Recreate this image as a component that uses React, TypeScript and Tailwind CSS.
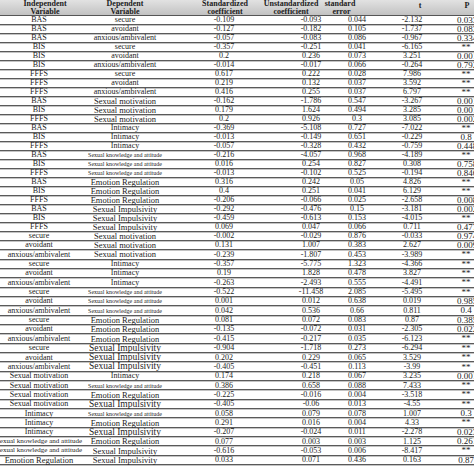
import React from "react";

type Row = [string, string, string, string, string, string, string];

const SKA = "Sexual knowledge and attitude";

const rows: Row[] = [
  ["BAS", "secure", "-0.109", "-0.093", "0.044", "-2.132", "0.033"],
  ["BAS", "avoidant", "-0.127", "-0.182", "0.105", "-1.737", "0.083"],
  ["BAS", "anxious/ambivalent", "-0.057", "-0.083", "0.086", "-0.967", "0.334"],
  ["BIS", "secure", "-0.357", "-0.251", "0.041", "-6.165", "**"],
  ["BIS", "avoidant", "0.2", "0.236", "0.073", "3.251", "0.001"],
  ["BIS", "anxious/ambivalent", "-0.014", "-0.017", "0.066", "-0.264", "0.792"],
  ["FFFS", "secure", "0.617", "0.222", "0.028", "7.986", "**"],
  ["FFFS", "avoidant", "0.219", "0.132", "0.037", "3.592", "**"],
  ["FFFS", "anxious/ambivalent", "0.416", "0.255", "0.037", "6.797", "**"],
  ["BAS", "Sexual motivation", "-0.162", "-1.786", "0.547", "-3.267", "0.001"],
  ["BIS", "Sexual motivation", "0.179", "1.624", "0.494", "3.285", "0.001"],
  ["FFFS", "Sexual motivation", "0.2", "0.926", "0.3", "3.085", "0.002"],
  ["BAS", "Intimacy", "-0.369", "-5.108", "0.727", "-7.022", "**"],
  ["BIS", "Intimacy", "-0.013", "-0.149", "0.651", "-0.229", "0.8"],
  ["FFFS", "Intimacy", "-0.057", "-0.328", "0.432", "-0.759", "0.448"],
  ["BAS", SKA, "-0.216", "-4.057", "0.968", "-4.189", "**"],
  ["BIS", SKA, "0.016", "0.254", "0.827", "0.308", "0.758"],
  ["FFFS", SKA, "-0.013", "-0.102", "0.525", "-0.194", "0.846"],
  ["BAS", "Emotion Regulation", "0.316", "0.242", "0.05", "4.826", "**"],
  ["BIS", "Emotion Regulation", "0.4", "0.251", "0.041", "6.129", "**"],
  ["FFFS", "Emotion Regulation", "-0.206", "-0.066", "0.025", "-2.658", "0.008"],
  ["BAS", "Sexual Impulsivity", "-0.292", "-0.476", "0.15", "-3.181", "0.002"],
  ["BIS", "Sexual Impulsivity", "-0.459", "-0.613", "0.153", "-4.015", "**"],
  ["FFFS", "Sexual Impulsivity", "0.069", "0.047", "0.066", "0.711", "0.477"],
  ["secure", "Sexual motivation", "-0.002", "-0.029", "0.876", "-0.033", "0.974"],
  ["avoidant", "Sexual motivation", "0.131", "1.007", "0.383", "2.627", "0.009"],
  ["anxious/ambivalent", "Sexual motivation", "-0.239", "-1.807", "0.453", "-3.989", "**"],
  ["secure", "Intimacy", "-0.357", "-5.775", "1.323", "-4.366", "**"],
  ["avoidant", "Intimacy", "0.19", "1.828", "0.478", "3.827", "**"],
  ["anxious/ambivalent", "Intimacy", "-0.263", "-2.493", "0.555", "-4.491", "**"],
  ["secure", SKA, "-0.522", "-11.458", "2.085", "-5.495", "**"],
  ["avoidant", SKA, "0.001", "0.012", "0.638", "0.019", "0.985"],
  ["anxious/ambivalent", SKA, "0.042", "0.536", "0.66", "0.811", "0.4"],
  ["secure", "Emotion Regulation", "0.081", "0.072", "0.083", "0.87", "0.385"],
  ["avoidant", "Emotion Regulation", "-0.135", "-0.072", "0.031", "-2.305", "0.022"],
  ["anxious/ambivalent", "Emotion Regulation", "-0.415", "-0.217", "0.035", "-6.123", "**"],
  ["secure", "Sexual Impulsivity", "-0.904", "-1.718", "0.273", "-6.294", "**"],
  ["avoidant", "Sexual Impulsivity", "0.202", "0.229", "0.065", "3.529", "**"],
  ["anxious/ambivalent", "Sexual Impulsivity", "-0.405", "-0.451", "0.113", "-3.99", "**"],
  ["Sexual motivation", "Intimacy", "0.174", "0.218", "0.067", "3.235", "0.001"],
  ["Sexual motivation", SKA, "0.386", "0.658", "0.088", "7.433", "**"],
  ["Sexual motivation", "Emotion Regulation", "-0.225", "-0.016", "0.004", "-3.518", "**"],
  ["Sexual motivation", "Sexual Impulsivity", "-0.405", "-0.06", "0.013", "-4.55", "**"],
  ["Intimacy", SKA, "0.058", "0.079", "0.078", "1.007", "0.3"],
  ["Intimacy", "Emotion Regulation", "0.291", "0.016", "0.004", "4.33", "**"],
  ["Intimacy", "Sexual Impulsivity", "-0.207", "-0.024", "0.011", "-2.278", "0.023"],
  [SKA, "Emotion Regulation", "0.077", "0.003", "0.003", "1.125", "0.261"],
  [SKA, "Sexual Impulsivity", "-0.616", "-0.053", "0.006", "-8.417", "**"],
  ["Emotion Regulation", "Sexual Impulsivity", "0.033", "0.071", "0.436", "0.163", "0.87"],
];

// bigger "Sexual Impulsivity" rows in the lower half of the table
const bigRows = [36, 37, 38, 42, 45];

function depSize(name: string, i: number) {
  if (name === SKA) return "text-[6px]";
  if (name === "Sexual Impulsivity") return bigRows.includes(i) ? "text-[9.5px]" : "text-[8.5px]";
  if (name === "Emotion Regulation") return "text-[8.5px]";
  if (name === "Sexual motivation") return "text-[8.5px]";
  return "text-[8px]";
}

function indSize(name: string) {
  if (name === SKA) return "text-[7px]";
  if (name === "Emotion Regulation") return "text-[8.5px]";
  return "text-[8px]";
}

const cols = "grid grid-cols-[78px_94px_104px_70px_22px_88px_1fr]";
const cell = "flex items-center justify-center whitespace-nowrap leading-none";

export default function App() {
  return (
    <div
      className="w-[474px] h-[466px] overflow-hidden bg-white text-[#1c1c1c]"
      style={{ fontFamily: '"Liberation Serif", "Times New Roman", serif' }}
    >
      <div className={`${cols} h-[15.5px] bg-linear-to-b from-[#e2e2e2] to-[#c2c2c2] border-b border-[#555] font-bold text-[8px] leading-[7.5px]`}>
        <div className={`${cell} flex-col translate-x-[6px]`}>
          <span>Independent</span>
          <span>Variable</span>
        </div>
        <div className={`${cell} flex-col`}>
          <span>Dependent</span>
          <span>Variable</span>
        </div>
        <div className={`${cell} flex-col translate-x-[1px]`}>
          <span>Standardized</span>
          <span>coefficient</span>
        </div>
        <div className={`${cell} flex-col -translate-x-[20px]`}>
          <span>Unstandardized</span>
          <span>coefficient</span>
        </div>
        <div className={`${cell} flex-col -translate-x-[17px]`}>
          <span>standard</span>
          <span className="pl-[3px]">error</span>
        </div>
        <div className={`${cell} translate-x-[8px] -translate-y-[2px]`}>t</div>
        <div className={`${cell} translate-x-[2px] -translate-y-[2px]`}>P</div>
      </div>

      {rows.map((r, i) => (
        <div
          key={i}
          className={`${cols} ${i < 24 ? "h-[9px]" : "h-[9.35px]"} border-b border-[#5a5a5a] shadow-[0_1px_0_#c4c4c4] text-[8px]`}
        >
          <div className={`${cell} ${indSize(r[0])}`}>{r[0]}</div>
          <div className={`${cell} ${depSize(r[1], i)}`}>{r[1]}</div>
          <div className={cell}>{r[2]}</div>
          <div className={cell}>{r[3]}</div>
          <div className={cell}>{r[4]}</div>
          <div className={cell}>{r[5]}</div>
          <div className={`${cell} text-[9px] translate-x-[1px]`}>{r[6]}</div>
        </div>
      ))}
    </div>
  );
}
